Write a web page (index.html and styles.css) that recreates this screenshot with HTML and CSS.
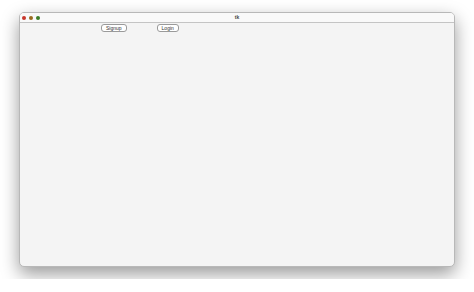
FILE: index.html
```html
<!DOCTYPE html>
<html lang="en">
<head>
    <meta charset="UTF-8">
    <meta name="viewport" content="width=device-width, initial-scale=1.0">
    <title>tk</title>
    <link rel="stylesheet" href="styles.css">
</head>
<body>
    <div class="window">
        <div class="titlebar">
            <div class="lights">
                <span class="light red"></span>
                <span class="light yellow"></span>
                <span class="light green"></span>
            </div>
            <div class="title">tk</div>
        </div>
        <div class="content">
            <div class="toolbar">
                <button class="btn">Signup</button>
                <button class="btn">Login</button>
            </div>
        </div>
    </div>
</body>
</html>
```

FILE: styles.css
```css
body {
    margin: 0;
    padding: 12px 19px;
    background-color: #ffffff;
    font-family: "Liberation Sans", Arial, sans-serif;
}
.window {
    width: 436px;
    height: 255px;
    box-sizing: border-box;
    border: 1px solid #b8b8b8;
    border-radius: 5px;
    overflow: hidden;
    display: flex;
    flex-direction: column;
    background-color: #f4f4f4;
    box-shadow: 0 7px 18px rgba(0,0,0,0.4);
}
.titlebar {
    position: relative;
    height: 9px;
    flex-shrink: 0;
    background-color: #f9f9f9;
    border-bottom: 1px solid #c4c4c4;
    display: flex;
    align-items: center;
}
.lights {
    display: flex;
    gap: 3px;
    padding-left: 2px;
}
.light {
    width: 4px;
    height: 4px;
    border-radius: 50%;
}
.red {
    background-color: #c8372c;
}
.yellow {
    background-color: #9a6a1e;
}
.green {
    background-color: #3b7d28;
}
.title {
    position: absolute;
    left: 0;
    right: 0;
    top: 1px;
    text-align: center;
    font-size: 5px;
    line-height: 7px;
    font-weight: bold;
    color: #444;
}
.content {
    flex: 1;
}
.toolbar {
    display: flex;
    gap: 30px;
    padding: 1px 0 0 81px;
}
.btn {
    font-family: inherit;
    font-size: 5px;
    line-height: 6px;
    height: 8px;
    padding: 0 4px;
    color: #333;
    background-color: #ffffff;
    border: 1px solid #9a9a9a;
    border-radius: 3px;
}
```
